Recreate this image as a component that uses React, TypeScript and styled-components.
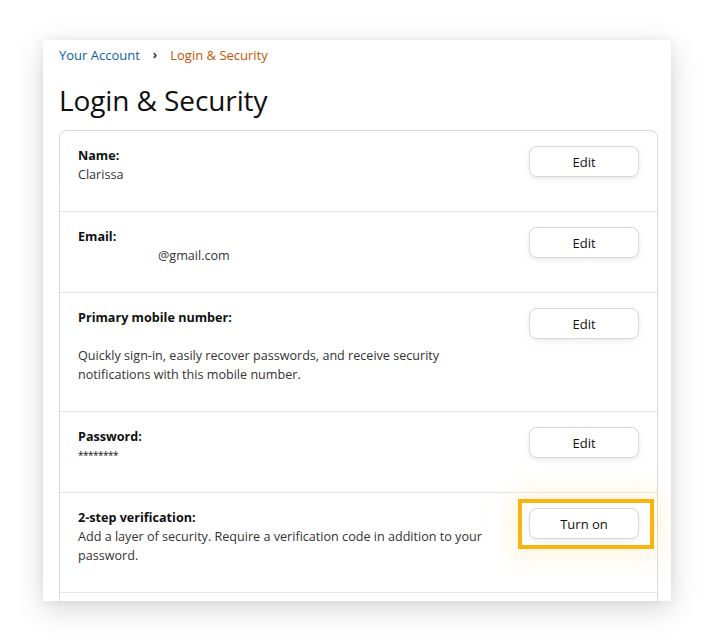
import React from "react";
import styled, { createGlobalStyle } from "styled-components";

const GlobalStyle = createGlobalStyle`
  html, body {
    margin: 0;
    padding: 0;
    background: #ffffff;
  }
  body {
    font-family: "Open Sans", "Noto Sans", Arial, sans-serif;
    color: #0f1111;
  }
`;

const Page = styled.div`
  width: 714px;
  height: 643px;
  padding: 40px 43px 0 43px;
  box-sizing: border-box;
  overflow: hidden;
`;

const Panel = styled.div`
  height: 561px;
  background: #fff;
  box-shadow: 0 8px 28px rgba(0, 0, 0, 0.16), 0 0 10px rgba(0, 0, 0, 0.05);
  padding: 6px 12px 0 16px;
  box-sizing: border-box;
  overflow: hidden;
`;

const Crumbs = styled.div`
  display: flex;
  align-items: center;
  gap: 13px;
  font-size: 13px;
  line-height: 18px;
`;

const CrumbLink = styled.span<{ $current?: boolean }>`
  color: ${(p) => (p.$current ? "#c45500" : "#0b5ea8")};
`;

const Sep = styled.span`
  color: #333;
  font-size: 12px;
  font-weight: 700;
`;

const Title = styled.h1`
  margin: 17px 0 11px 0;
  font-size: 28px;
  font-weight: 400;
  line-height: 38px;
  letter-spacing: -0.1px;
`;

const Card = styled.div`
  border: 1px solid #d5d9d9;
  border-radius: 8px;
  width: 599px;
  box-sizing: border-box;
`;

const Row = styled.div`
  display: flex;
  justify-content: space-between;
  align-items: flex-start;
  padding: 15px 18px 27px 18px;
  border-bottom: 1px solid #e3e6e6;
  position: relative;
`;

const EmptyRow = styled.div`
  height: 60px;
`;

const Info = styled.div`
  font-size: 12.6px;
  line-height: 19px;
  color: #333;
  max-width: 420px;
`;

const Label = styled.div`
  font-weight: 700;
  color: #0f1111;
`;

const Spacer = styled.div`
  height: 19px;
`;

const Redacted = styled.span`
  display: inline-block;
  width: 80px;
`;

const Stars = styled.div`
  font-size: 10px;
  line-height: 19px;
  letter-spacing: -0.5px;
  color: #0f1111;
`;

const Button = styled.button`
  width: 110px;
  height: 31px;
  flex-shrink: 0;
  background: #fff;
  border: 1px solid #d5d9d9;
  border-radius: 8px;
  box-shadow: 0 2px 5px rgba(213, 217, 217, 0.5);
  font-family: inherit;
  font-size: 13px;
  color: #0f1111;
  padding: 0;
`;

const Highlight = styled.div`
  position: absolute;
  right: 3px;
  top: 6px;
  width: 128px;
  height: 42px;
  border: 4px solid #fbb40f;
  box-shadow: 0 0 24px 6px rgba(255, 214, 120, 0.25);
  background: transparent;
`;

type Item = {
  label: string;
  lines?: React.ReactNode[];
  gap?: boolean;
  stars?: boolean;
  action: string;
  highlight?: boolean;
};

const items: Item[] = [
  { label: "Name:", lines: ["Clarissa"], action: "Edit" },
  {
    label: "Email:",
    lines: [
      <>
        <Redacted />@gmail.com
      </>,
    ],
    action: "Edit",
  },
  {
    label: "Primary mobile number:",
    gap: true,
    lines: [
      "Quickly sign-in, easily recover passwords, and receive security notifications with this mobile number.",
    ],
    action: "Edit",
  },
  { label: "Password:", stars: true, action: "Edit" },
  {
    label: "2-step verification:",
    lines: [
      "Add a layer of security. Require a verification code in addition to your password.",
    ],
    action: "Turn on",
    highlight: true,
  },
];

function App() {
  return (
    <>
      <GlobalStyle />
      <Page>
        <Panel>
          <Crumbs>
            <CrumbLink>Your Account</CrumbLink>
            <Sep>›</Sep>
            <CrumbLink $current>Login &amp; Security</CrumbLink>
          </Crumbs>
          <Title>Login &amp; Security</Title>
          <Card>
            {items.map((it) => (
              <Row key={it.label}>
                <Info>
                  <Label>{it.label}</Label>
                  {it.gap && <Spacer />}
                  {it.stars && <Stars>********</Stars>}
                  {it.lines?.map((l, i) => (
                    <div key={i}>{l}</div>
                  ))}
                </Info>
                <Button>{it.action}</Button>
                {it.highlight && <Highlight />}
              </Row>
            ))}
            <EmptyRow />
          </Card>
        </Panel>
      </Page>
    </>
  );
}

export default App;
